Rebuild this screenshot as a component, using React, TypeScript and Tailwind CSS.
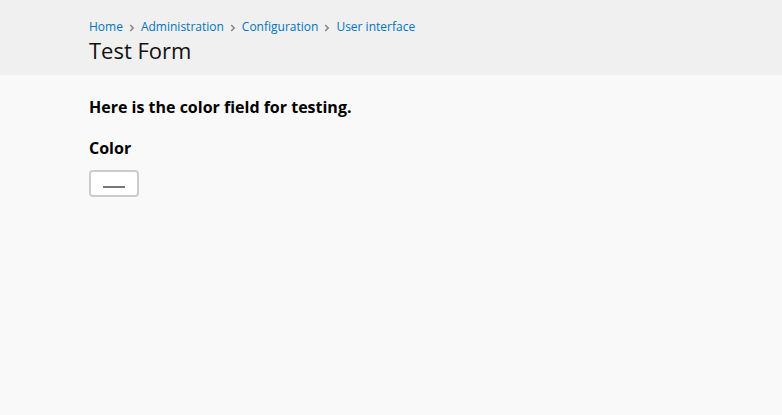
import React from "react";

function Chevron() {
  return (
    <svg width="6" height="8" viewBox="0 0 6 8" className="mx-[6px] mt-[2px]">
      <path d="M1.2 1 L4.2 4 L1.2 7" fill="none" stroke="#888" strokeWidth="1.6" />
    </svg>
  );
}

export default function App() {
  const crumbs = ["Home", "Administration", "Configuration", "User interface"];
  return (
    <div className="w-[782px] h-[415px] bg-[#f9f9f9] font-['Open_Sans',sans-serif] text-black">
      <div className="bg-[#f0f0f0] h-[75px] pl-[89px] pt-[18px]">
        <div className="flex items-center text-[12px] leading-[18px] text-[#0074bd]">
          {crumbs.map((c, i) => (
            <React.Fragment key={c}>
              {i > 0 && <Chevron />}
              <a>{c}</a>
            </React.Fragment>
          ))}
        </div>
        <h1 className="text-[22px] leading-[28px] font-normal text-[#111]">Test Form</h1>
      </div>
      <div className="pl-[89px] pt-[20px]">
        <p className="text-[16px] leading-[24px] font-bold">Here is the color field for testing.</p>
        <div className="mt-[17px] text-[16px] leading-[24px] font-bold">Color</div>
        <div className="mt-[10px] w-[50px] h-[27px] border-2 border-[#cccccc] rounded-[4px] bg-white flex items-end justify-center pb-[7px]">
          <div className="w-[22px] h-[2px] bg-[#777]" />
        </div>
      </div>
    </div>
  );
}
